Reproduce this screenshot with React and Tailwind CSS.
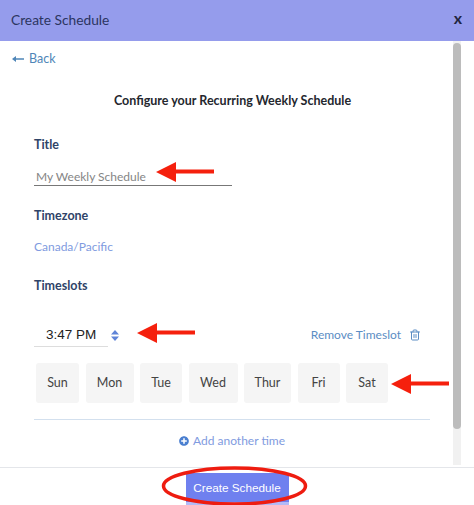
import { FiTrash2 } from "react-icons/fi";
import { FaPlusCircle } from "react-icons/fa";

const DAYS = [
  { label: "Sun", width: "w-[43px]" },
  { label: "Mon", width: "w-[48px]" },
  { label: "Tue", width: "w-[42px]" },
  { label: "Wed", width: "w-[49px]" },
  { label: "Thur", width: "w-[47px]" },
  { label: "Fri", width: "w-[42px]" },
  { label: "Sat", width: "w-[42px]" }
];

const Label = ({ children, className }) => (
  <div className={`text-[12.5px] leading-[18px] font-bold text-[#2f4468] ${className}`}>
    {children}
  </div>
);

/* red annotation arrow, tip on the left */
const RedArrow = ({ className }) => (
  <svg className={`absolute ${className}`} width="58" height="20" viewBox="0 0 58 20">
    <path d="M0 10 L20 0 L20 7.5 L58 7.5 L58 11.5 L20 11.5 L20 20 Z" fill="#f5200d" />
  </svg>
);

const App = () => {
  return (
    <div className="relative w-[474px] h-[505px] overflow-hidden bg-white font-['Lato','Noto_Sans',sans-serif]">

      {/* HEADER */}
      <div className="flex justify-between items-center h-[41px] pl-[11px] pr-[12px] bg-[#959cec]">
        <h3 className="text-[13.75px] text-[#2c3560]">Create Schedule</h3>
        <span className="mb-[6px] text-[16px] leading-none font-bold text-[#1f2440]">x</span>
      </div>

      <div className="flex h-[426px]">
        {/* BODY */}
        <div className="w-[453px] h-full">
          <div className="flex items-center gap-[5px] h-[16px] mt-[10px] pl-[12px] text-[12.5px] text-[#4f86b8]">
            <svg width="12" height="8" viewBox="0 0 12 8">
              <path d="M0 4 L4 1 L4 3.2 L12 3.2 L12 4.8 L4 4.8 L4 7 Z" fill="#4f86b8" />
            </svg>
            <span>Back</span>
          </div>

          <h2 className="mt-[25px] ml-[12px] text-center text-[12.5px] leading-[18px] font-bold text-[#24272e]">
            Configure your Recurring Weekly Schedule
          </h2>

          <div className="pl-[34px]">
            <Label className="mt-[26px]">Title</Label>

            <div className="w-[198px] h-[22px] mt-[10px] pl-[2px] pt-[4px] border-b-[1.5px] border-[#777] text-[12px] leading-[18px] text-[#858585]">
              My Weekly Schedule
            </div>

            <Label className="mt-[21px]">Timezone</Label>
            <div className="mt-[12px] text-[12px] leading-[20px] text-[#7f9be0]">Canada/Pacific</div>

            <Label className="mt-[20px]">Timeslots</Label>

            <div className="flex items-start justify-between h-[28px] w-[387px] mt-[24px]">
              <div className="flex items-start">
                <div className="w-[74px] h-[28px] pl-[12px] pt-[6px] border-b border-[#ddd] text-[13.5px] leading-[20px] font-['Liberation_Sans'] text-[#222]">
                  3:47 PM
                </div>
                <svg className="ml-[3px] mt-[11px]" width="8" height="11" viewBox="0 0 8 11">
                  <path d="M4 0 L8 4.5 L0 4.5 Z M0 6.5 L8 6.5 L4 11 Z" fill="#5f84d8" />
                </svg>
              </div>
              <div className="flex items-center gap-[8px] h-[20px] mt-[6px] text-[12px] text-[#5b8dc4]">
                <span>Remove Timeslot</span>
                <FiTrash2 size={12} />
              </div>
            </div>

            <div className="flex gap-[6.5px] mt-[16px] ml-[2px]">
              {DAYS.map(day => (
                <div
                  key={day.label}
                  className={`flex items-center justify-center h-[40px] pt-[1px] rounded-[3px] bg-[#f5f5f5] text-[12.5px] text-[#444] ${day.width}`}
                >
                  {day.label}
                </div>
              ))}
            </div>

            <div className="w-[396px] mt-[16px] border-t border-[#d3e0ee]"></div>

            <div className="flex items-center justify-center gap-[4px] w-[396px] mt-[13px] text-[12px] leading-[16px] text-[#7f9be0]">
              <FaPlusCircle size={10} className="text-[#4a7fd0]" />
              <span>Add another time</span>
            </div>
          </div>
        </div>

        {/* SCROLLBAR */}
        <div className="w-[8px] h-[424px] bg-[#f1f1f1]">
          <div className="w-full h-[386px] mt-[2px] rounded-[4px] bg-[#bcbcbc]"></div>
        </div>
      </div>

      {/* FOOTER */}
      <div className="flex justify-center h-[38px] border-t border-[#e4e6ea]">
        <div className="w-[103px] h-[38px] mt-[5px] bg-[#b3baf7]">
          <button className="w-full h-[29px] bg-[#6f80ef] text-[11.75px] font-['Liberation_Sans'] text-white">
            Create Schedule
          </button>
        </div>
      </div>

      {/* ANNOTATIONS */}
      <RedArrow className="left-[156px] top-[162px]" />
      <RedArrow className="left-[137px] top-[323px]" />
      <RedArrow className="left-[391px] top-[374px]" />
      <svg className="absolute left-[160px] top-[465px]" width="150" height="40" viewBox="0 0 150 40">
        <ellipse cx="74.5" cy="21" rx="71" ry="18" fill="none" stroke="#ee1c10" strokeWidth="3.5" />
      </svg>
    </div>
  );
};

export default App;
